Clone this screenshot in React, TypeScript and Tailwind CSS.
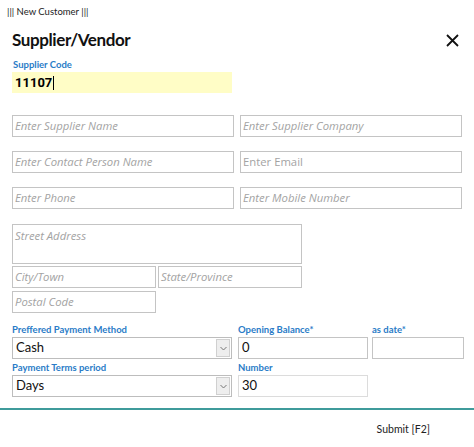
import React from "react";

const inputCls =
  "h-[22px] border border-[#c4c4c4] bg-white pl-[2px] pr-[3px] text-[11.3px] italic text-[#a3a3a3] flex items-center";

function Field({ placeholder, className = "" }: { placeholder: string; className?: string }) {
  return <div className={`${inputCls} ${className}`}>{placeholder}</div>;
}

function Label({ children }: { children: React.ReactNode }) {
  return (
    <div
      className="h-[12px] text-[9.5px] leading-[12px] font-bold text-[#2a7cc7]"
      style={{ fontFamily: "Lato, Roboto, sans-serif" }}
    >
      {children}
    </div>
  );
}

function Select({ value }: { value: string }) {
  return (
    <div className="flex h-[22px] w-[220px] items-center border border-[#bdbdbd] bg-white">
      <span className="flex-1 pl-[3px] text-[13px] text-[#111]" style={{ fontFamily: "Lato, sans-serif" }}>
        {value}
      </span>
      <span className="mr-[1px] flex h-[18px] w-[14px] items-center justify-center border border-[#d0d0d0] bg-[#eeeeee]">
        <svg width="7" height="5" viewBox="0 0 7 5">
          <path d="M0.5 1 L3.5 4 L6.5 1" fill="none" stroke="#777" strokeWidth="1" />
        </svg>
      </span>
    </div>
  );
}

export default function App() {
  return (
    <div
      className="relative h-[447px] w-[474px] overflow-hidden bg-white text-black"
      style={{ fontFamily: '"Open Sans", "Noto Sans", sans-serif' }}
    >
      {/* title bar */}
      <div
        className="pl-[7px] pt-[5px] text-[9.5px] leading-[14px] text-[#222]"
        style={{ fontFamily: "Lato, sans-serif" }}
      >
        ||| New Customer |||
      </div>

      {/* header */}
      <div className="mt-[9px] flex items-center justify-between pl-[12px] pr-[12px]">
        <h1
          className="text-[17px] font-bold leading-[24px] tracking-[-0.4px] text-[#111]"
          style={{ fontFamily: "Lato, Arial, sans-serif" }}
        >
          Supplier/Vendor
        </h1>
        <svg width="13" height="13" viewBox="0 0 13 13" className="mr-[3px]">
          <path d="M1 1 L12 12 M12 1 L1 12" stroke="#111" strokeWidth="1.8" />
        </svg>
      </div>

      <div className="px-[12px]">
        {/* supplier code */}
        <div className="mt-[7px] pl-[1px]">
          <Label>Supplier Code</Label>
        </div>
        <div className="mt-[1px] flex h-[21px] w-[220px] items-center bg-[#fffdc6] pl-[3px]">
          <span
            className="text-[13px] font-bold text-black"
            style={{ fontFamily: "Roboto, Arial, sans-serif" }}
          >
            11107
          </span>
          <span className="ml-[1px] h-[14px] w-px bg-black" />
        </div>

        {/* rows */}
        <div className="mt-[22px] flex flex-col gap-[14px]">
          <div className="flex gap-[6px]">
            <Field placeholder="Enter Supplier Name" className="w-[223px]" />
            <Field placeholder="Enter Supplier Company" className="w-[223px]" />
          </div>
          <div className="flex gap-[6px]">
            <Field placeholder="Enter Contact Person Name" className="w-[223px]" />
            <Field placeholder="Enter Email" className="w-[223px] not-italic" />
          </div>
          <div className="flex gap-[6px]">
            <Field placeholder="Enter Phone" className="w-[223px]" />
            <Field placeholder="Enter Mobile Number" className="w-[223px]" />
          </div>
        </div>

        {/* address */}
        <div className="mt-[15px] flex flex-col gap-[2px]">
          <div className="h-[40px] w-[290px] border border-[#c4c4c4] pl-[2px] pr-[3px] pt-[3px] text-[11.3px] italic leading-[16px] text-[#a3a3a3]">
            Street Address
          </div>
          <div className="flex gap-[2px]">
            <Field placeholder="City/Town" className="w-[144px]" />
            <Field placeholder="State/Province" className="w-[144px]" />
          </div>
          <div className="mt-[1px]">
            <Field placeholder="Postal Code" className="w-[144px]" />
          </div>
        </div>

        {/* payment */}
        <div className="mt-[11px] flex gap-[6px]">
          <div className="flex flex-col gap-[1px]">
            <Label>Preffered Payment Method</Label>
            <Select value="Cash" />
          </div>
          <div className="flex flex-col gap-[1px]">
            <Label>Opening Balance*</Label>
            <div className="flex h-[22px] w-[130px] items-center border border-[#c4c4c4] pl-[3px] text-[13px] text-[#111]" style={{ fontFamily: "Lato, sans-serif" }}>
              0
            </div>
          </div>
          <div className="-ml-[2px] flex flex-col gap-[1px]">
            <Label>as date*</Label>
            <div className="h-[22px] w-[92px] border border-[#c4c4c4]" />
          </div>
        </div>
        <div className="mt-[3px] flex gap-[6px]">
          <div className="flex flex-col gap-[1px]">
            <Label>Payment Terms period</Label>
            <Select value="Days" />
          </div>
          <div className="flex flex-col gap-[1px]">
            <Label>Number</Label>
            <div className="flex h-[22px] w-[130px] items-center border border-[#dcdcdc] pl-[3px] text-[13px] text-[#111]" style={{ fontFamily: "Lato, sans-serif" }}>
              30
            </div>
          </div>
        </div>
      </div>

      {/* footer */}
      <div className="mt-[11px] h-[2px] w-full bg-[#3f9b9b]" />
      <div className="flex justify-end pr-[44px] pt-[12px]">
        <span className="text-[10.5px] leading-[14px] text-[#222]" style={{ fontFamily: "Lato, sans-serif" }}>
          Submit [F2]
        </span>
      </div>
    </div>
  );
}
